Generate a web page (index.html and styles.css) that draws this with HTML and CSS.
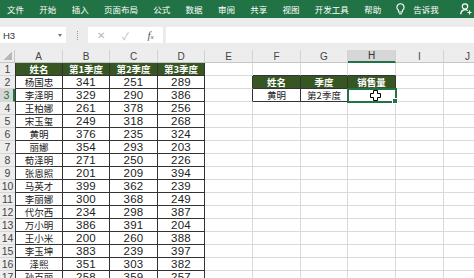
FILE: index.html
```html
<!DOCTYPE html>
<html lang="zh-CN">
<head>
  <meta charset="UTF-8">
  <title>工作簿1 - Excel</title>
  <link rel="stylesheet" href="styles.css">
</head>
<body>
  <div class="ribbon">
    <nav class="tabs">
      <span>文件</span>
      <span>开始</span>
      <span>插入</span>
      <span>页面布局</span>
      <span>公式</span>
      <span>数据</span>
      <span>审阅</span>
      <span>共享</span>
      <span>视图</span>
      <span>开发工具</span>
      <span>帮助</span>
    </nav>
    <span class="bulb">
      <svg width="9" height="12" viewBox="0 0 9 12" fill="none" stroke="#fff" stroke-width="1.1">
        <path d="M4.5 0.8a3.5 3.5 0 0 0-2 6.4V9h4V7.2a3.5 3.5 0 0 0-2-6.4z"/>
        <path d="M3 10.8h3"/>
      </svg>
    </span>
    <span class="tell">告诉我</span>
    <span class="user">
      <svg width="12" height="12" viewBox="0 0 12 12" fill="none" stroke="#fff" stroke-width="1.2">
        <circle cx="5" cy="3.5" r="2.7"/>
        <path d="M0.8 11.2a4.3 4.3 0 0 1 7-3.6"/>
        <path d="M9.5 7.5v4M7.5 9.5h4"/>
      </svg>
    </span>
  </div>

  <div class="fbar">
    <div class="namebox"><span>H3</span><span class="caret"></span></div>
    <div class="grip"></div>
    <div class="fbtns">
      <span class="x">✕</span>
      <span class="ok">✓</span>
      <span class="fx">f<small>x</small></span>
    </div>
    <div class="finput"></div>
  </div>

  <div class="sheet" id="sheet"></div>

  <script>
    const data = [
      ['姓名', '第1季度', '第2季度', '第3季度'],
      ['杨国忠', 341, 251, 289],
      ['李泽明', 329, 290, 386],
      ['王柏娜', 261, 378, 256],
      ['宋玉玺', 249, 318, 268],
      ['黄明', 376, 235, 324],
      ['丽娜', 354, 293, 203],
      ['荀泽明', 271, 250, 226],
      ['张恩照', 201, 209, 394],
      ['马英才', 399, 362, 239],
      ['李丽娜', 300, 368, 249],
      ['代尔西', 234, 298, 387],
      ['万小明', 386, 391, 204],
      ['王小米', 200, 260, 388],
      ['李玉坤', 383, 239, 397],
      ['泽熙', 351, 303, 382],
      ['孙百丽', 258, 359, 257]
    ];

    // lookup table in F2:H3
    const side = {
      2: ['姓名', '季度', '销售量'],
      3: ['黄明', '第2季度', '']
    };

    const sheet = document.getElementById('sheet');

    function add(cls, text) {
      const d = document.createElement('div');
      d.className = cls;
      if (text !== undefined) d.textContent = text;
      sheet.appendChild(d);
      return d;
    }

    add('corner');
    'ABCDEFGHIJ'.split('').forEach(c => add('ch' + (c === 'H' ? ' sel' : ''), c));

    data.forEach((row, i) => {
      const r = i + 1;
      add('rh' + (r === 3 ? ' sel' : ''), r);

      for (let c = 0; c < 10; c++) {
        let cls = 'cell';
        let text = '';

        if (c < 4) {
          cls += ' tb';
          text = row[c];
          if (c === 0) cls += ' first';
          if (r === 1) cls += ' hd';
        } else if (side[r] && c >= 5 && c <= 7) {
          cls += ' tb';
          text = side[r][c - 5];
          if (r === 2) cls += ' hd';
          if (r === 3 && c === 7) cls += ' active';
        } else if (r === 1 && c >= 5 && c <= 7) {
          cls += ' above';
        } else if (c === 4 && side[r]) {
          cls += ' before';
        }

        if (typeof text === 'number') cls += ' num';

        const cell = add(cls, text);
        if (cls.includes('active')) {
          cell.innerHTML = '<svg class="cursor" width="11" height="11" viewBox="0 0 11 11">' +
            '<path d="M3.5 0.5h4v3h3v4h-3v3h-4v-3h-3v-4h3z" fill="#fff" stroke="#000" stroke-width="1"/></svg>';
        }
      }
    });
  </script>
</body>
</html>
```

FILE: styles.css
```css
body {
  margin: 0;
  width: 474px;
  height: 278px;
  overflow: hidden;
  background: #fff;
  font-family: "Liberation Sans", "Noto Sans CJK SC", sans-serif;
}

/* ribbon */
.ribbon {
  height: 18px;
  background: #217346;
  color: #fff;
  display: flex;
  align-items: center;
  font-family: "Noto Sans CJK SC", sans-serif;
  font-size: 8.5px;
  line-height: 1;
}

.tabs {
  display: flex;
  gap: 15.3px;
  padding-left: 7px;
}

.bulb {
  display: flex;
  margin-left: 15px;
}

.tell {
  margin-left: 8px;
  white-space: nowrap;
}

.user {
  display: flex;
  width: 12px;
  height: 12px;
  margin-left: 21px;
}

/* formula bar */
.fbar {
  height: 32px;
  box-sizing: border-box;
  padding: 9px 0 7px;
  background: #ececec;
  display: flex;
}

.namebox {
  width: 66px;
  box-sizing: border-box;
  padding: 0 4px 0 3px;
  background: #fff;
  display: flex;
  align-items: center;
  justify-content: space-between;
  font-size: 9.5px;
  color: #333;
}

.caret {
  border-top: 3px solid #777;
  border-left: 2px solid transparent;
  border-right: 2px solid transparent;
}

.grip {
  width: 22px;
  display: flex;
  align-items: center;
  justify-content: center;
}

.grip::before {
  content: "";
  height: 9px;
  border-left: 1px dotted #999;
}

.fbtns {
  width: 75px;
  background: #fff;
  display: flex;
  align-items: center;
}

.fbtns span {
  width: 25px;
  text-align: center;
  color: #b5b5b5;
  font-size: 10px;
}

.fbtns .fx {
  color: #555;
  font-family: "Liberation Serif", serif;
  font-style: italic;
  font-size: 11px;
}

.fbtns .fx small {
  font-size: 7px;
}

.finput {
  flex: 1;
  margin-left: 3px;
  background: #fff;
}

/* sheet */
.sheet {
  display: grid;
  grid-template-columns: 15px 48px 47px 48px 47px 48px 48px 47px 48px 48px 48px;
  grid-auto-rows: 13px;
}

.sheet > div {
  box-sizing: border-box;
  display: flex;
  align-items: center;
  justify-content: center;
  white-space: nowrap;
  overflow: hidden;
}

.corner {
  background: linear-gradient(to bottom right, transparent 50%, #b8b8b8 50%) no-repeat right 2px bottom 2px / 9px 9px, #ededed;
  border-right: 1px solid #c6c6c6;
  border-bottom: 1px solid #c6c6c6;
}

.ch {
  background: #ededed;
  border-right: 1px solid #d2d2d2;
  border-bottom: 1px solid #c6c6c6;
  font-size: 10px;
  color: #444;
}

.ch.sel {
  background: #d6d6d6;
  border-bottom: 2px solid #217346;
  color: #333;
}

.rh {
  background: #ededed;
  border-bottom: 1px solid #d6d6d6;
  font-size: 10.5px;
  color: #444;
}

.rh.sel {
  background: #d6d6d6;
  border-right: 2px solid #217346;
  color: #217346;
}

.cell {
  border-right: 1px solid #dadada;
  border-bottom: 1px solid #dadada;
  font-family: "Noto Sans CJK SC", sans-serif;
  font-size: 9.5px;
  color: #222;
}

.cell.num {
  font-family: "Liberation Sans", sans-serif;
  font-size: 11.5px;
  letter-spacing: 0.3px;
}

.cell.tb { border-color: #333; }
.cell.first { border-left: 1px solid #333; }
.cell.above { border-bottom-color: #333; }
.cell.before { border-right-color: #333; }

.cell.hd {
  background: #375623;
  color: #fff;
  font-weight: bold;
}

.cell.active {
  position: relative;
  overflow: visible;
  outline: 2px solid #217346;
  outline-offset: -1px;
}

.cell.active::after {
  content: "";
  position: absolute;
  right: -3px;
  bottom: -3px;
  width: 4px;
  height: 4px;
  background: #217346;
  border: 1px solid #fff;
}

.cursor {
  position: absolute;
  left: 22px;
  top: 1px;
}
```
